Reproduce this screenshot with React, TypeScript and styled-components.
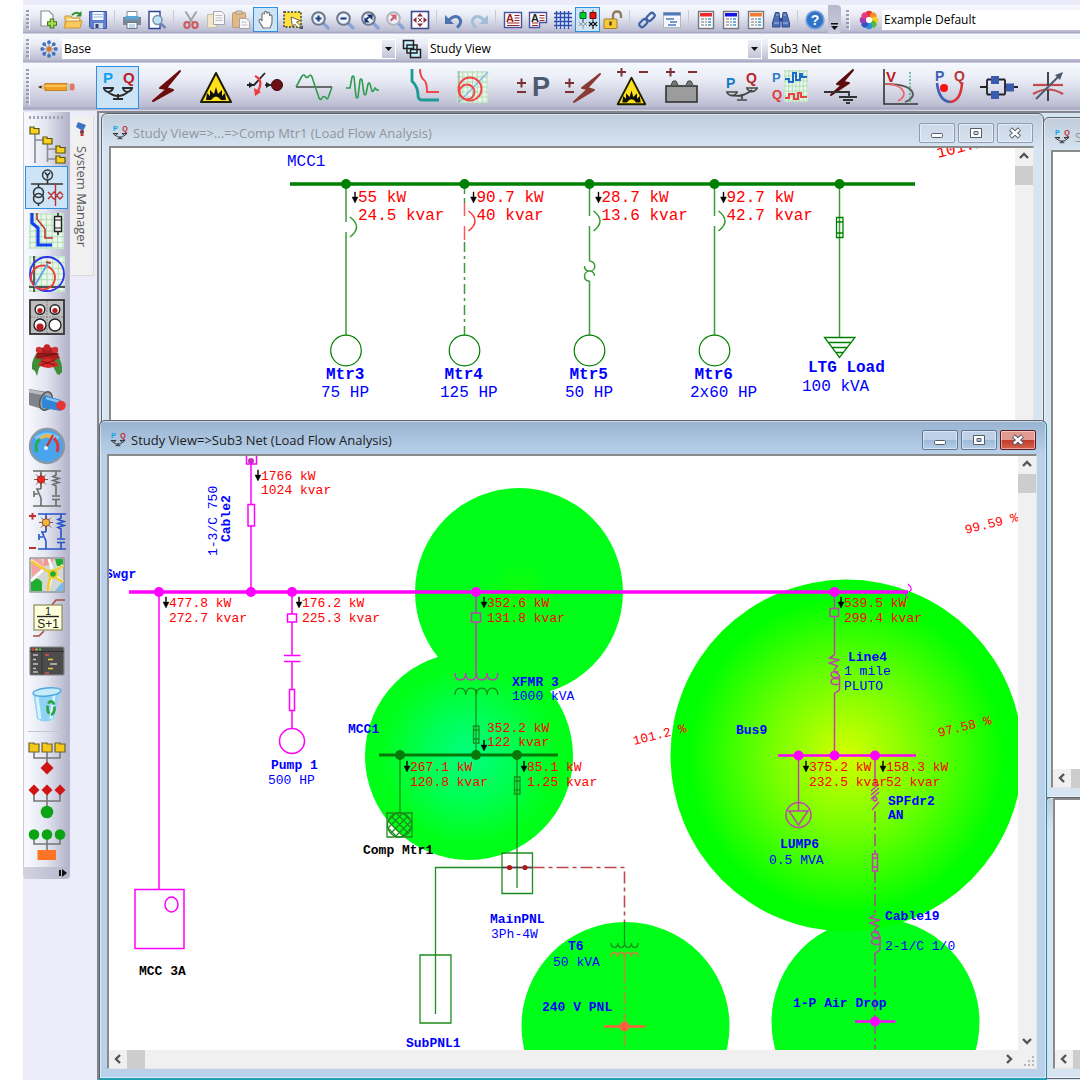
import React from "react";
import styled, { createGlobalStyle, css } from "styled-components";

const UI_FONT = `"Open Sans", "Noto Sans", sans-serif`;
const MONO = `"Liberation Mono", "DejaVu Sans Mono", monospace`;
const GREEN = "#008000";
const MAGENTA = "#ff00ff";
const BLUE = "#0000ff";
const RED = "#ff0000";

const GlobalStyle = createGlobalStyle`
  * { box-sizing: border-box; }
  body { margin: 0; background: #fff; font-family: ${UI_FONT}; font-size: 12px; color: #000; }
  button, select { font: inherit; color: inherit; }
`;

/* ---------- shell ---------- */

const Shell = styled.div`
  display: flex;
  flex-direction: column;
  height: 100vh;
  margin-left: 23px;
  padding-top: 5px;
  overflow: hidden;
  background: #ebebfa;
`;

const ToolRow = styled.div`
  display: flex;
  flex: none;
`;

const toolbarSkin = css`
  background: linear-gradient(#f6f9fe 0%, #e9ecf5 35%, #bcbcd2 90%, #a9a9c3 94%, #a9a9c3 96%, #e6e6f2 100%);
`;

const Toolbar = styled.div<{ $grow?: boolean; $height: number }>`
  ${toolbarSkin}
  display: flex;
  align-items: center;
  flex: ${(p) => (p.$grow ? "1 1 0" : "none")};
  min-width: 0;
  height: ${(p) => p.$height}px;
  padding-left: 3px;
  overflow: hidden;
`;

const Grip = styled.span`
  flex: none;
  width: 4px;
  height: 20px;
  margin-right: 5px;
  background: repeating-linear-gradient(#9a9aae 0 2px, transparent 2px 4px);
  border-right: 1px solid #f6f6fc;
`;

const TallGrip = styled(Grip)`
  height: 36px;
`;

const SideGrip = styled.span`
  flex: none;
  width: 36px;
  height: 3px;
  margin: 4px 0;
  background: repeating-linear-gradient(90deg, #a2a2b4 0 2px, transparent 2px 4px);
`;

const Separator = styled.span`
  flex: none;
  width: 1px;
  height: 20px;
  margin: 0 4px;
  background: #c9c9d4;
`;

const buttonSkin = css<{ $active?: boolean }>`
  display: flex;
  align-items: center;
  justify-content: center;
  flex: none;
  padding: 0;
  border: 1px solid transparent;
  background: transparent;
  ${(p) => p.$active && css`
    border-color: #2f8fe0;
    background: #cde4f7;
  `}
`;

const SmallButton = styled.button<{ $active?: boolean; $wide?: boolean }>`
  ${buttonSkin}
  width: ${(p) => (p.$wide ? 29 : 25)}px;
  height: 25px;
`;

const LargeButton = styled.button<{ $active?: boolean }>`
  ${buttonSkin}
  width: 43px;
  height: 43px;
`;

const LargeGroup = styled.div`
  display: flex;
  gap: 6px;
  margin-right: 18px;
`;

const OverflowButton = styled.button`
  display: flex;
  align-items: flex-end;
  justify-content: center;
  width: 13px;
  height: 29px;
  margin: 0 2px 0 1px;
  padding: 0 0 4px;
  border: 0;
  border-radius: 0 4px 4px 0;
  background: linear-gradient(#b9b9cc, #c9c9dc);
`;

const Combo = styled.label<{ $fixed?: boolean }>`
  display: grid;
  flex: ${(p) => (p.$fixed ? "0 1 334px" : "1 1 0")};
  min-width: 0;
  height: 20px;
  background: #fff;
`;

const ComboSelect = styled.select`
  grid-area: 1 / 1;
  min-width: 0;
  width: 100%;
  height: 20px;
  padding: 0 0 0 2px;
  border: 0;
  background: transparent;
  appearance: none;
  line-height: 20px;
`;

const ComboArrow = styled.span`
  grid-area: 1 / 1;
  justify-self: end;
  display: flex;
  align-items: center;
  justify-content: center;
  width: 13px;
  height: 18px;
  margin: 1px;
  background: linear-gradient(#eeeef6, #c3c3d8);
  pointer-events: none;
`;

const ComboIcon = styled.span<{ $lead?: boolean }>`
  display: flex;
  justify-content: center;
  flex: none;
  width: ${(p) => (p.$lead ? 27 : 32)}px;
`;

const Gap = styled.span`
  flex: none;
  width: 6px;
`;

const Workspace = styled.div`
  display: flex;
  flex: 1;
  min-height: 0;
`;

const SideColumn = styled.aside`
  flex: none;
  width: 47px;
  padding-top: 1px;
`;

const SideBar = styled.nav`
  display: flex;
  flex-direction: column;
  align-items: center;
  border-right: 1px solid #b9b9cb;
  border-left: 1px solid #c9c9d8;
  background: linear-gradient(90deg, #f6f8fd 10%, #e2e4f0 50%, #b3b3c9 100%);
`;

const SideSeparator = styled.span`
  width: 38px;
  height: 1px;
  margin: 6px 0;
  background: #c4c4ca;
`;

const SideFooter = styled.div`
  display: flex;
  justify-content: flex-end;
  height: 12px;
  padding: 2px 3px 0 0;
  border-radius: 0 0 4px 4px;
  background: linear-gradient(90deg, #d3d3e0, #b6b6ca);
`;

const TabColumn = styled.div`
  flex: none;
  width: 27px;
  padding: 5px 3px 0 1px;
`;

const SideTab = styled.button`
  display: flex;
  flex-direction: column;
  align-items: center;
  gap: 9px;
  width: 23px;
  height: 160px;
  padding: 5px 0 0;
  border: 1px solid #d9d9d9;
  border-top: 0;
  border-left: 0;
  background: #f0f0f0;
  color: #5a5a5a;
`;

const SideTabText = styled.span`
  writing-mode: vertical-rl;
  font-size: 13px;
  line-height: 20px;
`;

/* ---------- windows on the desktop ---------- */

const Desktop = styled.main`
  position: relative;
  flex: 1;
  min-width: 0;
  overflow: hidden;
  border-top: 2px solid #85858d;
  border-left: 2px solid #85858d;
  background: #d7e4f2;
`;

interface Box {
  $left: number;
  $top: number;
  $width: number;
  $height: number;
}

const Frame = styled.section<Box & { $front?: boolean }>`
  position: absolute;
  left: ${(p) => p.$left}px;
  top: ${(p) => p.$top}px;
  width: ${(p) => p.$width}px;
  height: ${(p) => p.$height}px;
  display: flex;
  flex-direction: column;
  padding: 0 9px 9px 7px;
  border: 1px solid #5c646c;
  border-radius: 6px 6px 0 0;
  box-shadow: inset 0 0 0 1px rgba(255, 255, 255, 0.5);
  background: ${(p) =>
    p.$front ? "linear-gradient(#99b4d1, #b9d1ea 34px)" : "linear-gradient(#bfcddb, #d7e4f2 34px)"};
  ${(p) => p.$front && css`
    border-right-color: #1f8894;
    border-bottom: 2px solid #1fa3b3;
  `}
`;

const TitleBar = styled.header<{ $dim?: boolean }>`
  display: flex;
  align-items: center;
  flex: none;
  gap: 4px;
  height: ${(p) => (p.$dim ? 32 : 33)}px;
  padding: 5px 1px 0 2px;
  color: ${(p) => (p.$dim ? "#8f959b" : "#1c1c1c")};
`;

const Title = styled.h2`
  flex: 1;
  margin: 0;
  overflow: hidden;
  font-size: 13px;
  font-weight: 400;
  line-height: 20px;
  white-space: nowrap;
`;

const CaptionButtons = styled.div`
  display: flex;
  gap: 3px;
`;

const CaptionButton = styled.button<{ $danger?: boolean; $dim?: boolean }>`
  display: flex;
  align-items: center;
  justify-content: center;
  width: 36px;
  height: 20px;
  padding: 0;
  border: 1px solid ${(p) => (p.$danger ? "#5c1a20" : p.$dim ? "#8b9cb4" : "#5f7694")};
  border-radius: 2px;
  box-shadow: inset 0 0 0 1px rgba(255, 255, 255, 0.45);
  background: ${(p) =>
    p.$danger
      ? "linear-gradient(#e19a90 0 48%, #bf3a2b 50%, #d4624c)"
      : p.$dim
      ? "linear-gradient(#ccd8e5, #d6e2ef)"
      : "linear-gradient(#bed1e7 0 48%, #9db9d8 50%, #b5cde6)"};
`;

const Client = styled.div`
  display: grid;
  grid-template-columns: minmax(0, 1fr) auto;
  grid-template-rows: minmax(0, 1fr) auto;
  flex: 1;
  min-height: 0;
  border: solid #8a8a8a;
  border-width: 2px 1px 1px 2px;
  border-right-color: #e6e6e6;
  border-bottom-color: #e6e6e6;
  background: #fff;
`;

const Canvas = styled.div`
  min-width: 0;
  min-height: 0;
  overflow: hidden;
`;

const Diagram = styled.svg`
  display: block;
  font-family: ${MONO};
`;

const VScroll = styled.div`
  display: flex;
  flex-direction: column;
  width: 18px;
  background: #f0f0f0;
`;

const HScroll = styled.div`
  display: flex;
  height: 18px;
  background: #f0f0f0;
`;

const Corner = styled.div`
  display: flex;
  align-items: flex-end;
  justify-content: flex-end;
  width: 18px;
  background: #f0f0f0;
`;

const ScrollArrow = styled.button`
  display: flex;
  align-items: center;
  justify-content: center;
  flex: none;
  width: 18px;
  height: 18px;
  padding: 0;
  border: 0;
  background: transparent;
`;

const Thumb = styled.div`
  flex: none;
  width: 18px;
  height: 19px;
  background: #cdcdcd;
`;

const Fill = styled.div`
  flex: 1;
`;

/* ---------- icon helpers ---------- */

const Glyph = ({ size, children, vb }: { size: number; vb?: string; children: React.ReactNode }) => (
  <svg width={size} height={size} viewBox={vb ?? `0 0 ${size} ${size}`} fill="none" aria-hidden="true">
    {children}
  </svg>
);

const Sheet = ({ x = 3, y = 1 }: { x?: number; y?: number }) => (
  <path d={`M${x} ${y}h8l4 4v11h-12z`} fill="#fdfdfd" stroke="#8e8e96" strokeWidth="1.2" />
);

const Lens = ({ ring = "#8d95a3", children }: { ring?: string; children?: React.ReactNode }) => (
  <>
    <path d="M13 13l5 5" stroke="#86a6d8" strokeWidth="3.4" strokeLinecap="round" />
    <circle cx="8.500" cy="8.500" r="6.300" fill="#eaf4fc" stroke={ring} strokeWidth="2" />
    {children}
  </>
);

const Report = ({ color }: { color: string }) => (
  <>
    <rect x="2.500" y="1.500" width="15" height="17" fill="#fafafa" stroke="#77777f" strokeWidth="1.400" />
    <rect x="4" y="3" width="12" height="3.500" fill={color} />
    <path d="M5 9h3M5 12h3M5 15h3M9 9h2M9 12h2M9 15h2" stroke="#9aa0aa" strokeWidth="1.600" />
    <path d="M12 9h3M12 12h3M12 15h3" stroke="#66b4dc" strokeWidth="2" />
  </>
);

const smallIcons: Record<string, React.ReactNode> = {
  New: (
    <>
      <Sheet />
      <path d="M14 8.500v10M9 13.500h10" stroke="#3c7d1c" strokeWidth="4.600" />
      <path d="M14 9.500v8M10 13.500h8" stroke="#a4dd4c" strokeWidth="2.400" />
    </>
  ),
  Open: (
    <>
      <path d="M2 17V6h6l1.500 2H17v9z" fill="#f7cf6a" stroke="#c9963a" />
      <path d="M4 9h12v5H4z" fill="#fff8e0" />
      <path d="M1 18l2.500-7H19l-2 7z" fill="#f9c95c" stroke="#c9963a" />
      <path d="M9 5q4-4 8-1" stroke="#2f8f2f" strokeWidth="2" />
      <path d="M18.500 1v5.500H13z" fill="#2f8f2f" />
    </>
  ),
  Save: (
    <>
      <path d="M1.500 1.500h17v17H3l-1.500-1.500z" fill="#5d7fd0" stroke="#3f57a4" />
      <path d="M4.500 2h11v8h-11z" fill="#f4f8ff" />
      <path d="M5.500 4.500h9M5.500 7h9" stroke="#9fb4dc" />
      <path d="M6 13h9v5.500H6z" fill="#cdd6e4" />
      <path d="M7.500 14h3v4h-3z" fill="#34437c" />
    </>
  ),
  Print: (
    <>
      <path d="M5 1.500h10V8H5z" fill="#fff" stroke="#7b8795" />
      <path d="M1 7h18v8H1z" fill="#7b8794" />
      <path d="M3.500 6h13v3.500h-13z" fill="#5aa4dc" />
      <path d="M5 12.500h10v6H5z" fill="#f7fbff" stroke="#6b7888" />
      <path d="M7 15h6M7 17h6" stroke="#86b4dc" />
    </>
  ),
  Preview: (
    <>
      <path d="M2 1.500h11v17H2z" fill="#fff" stroke="#30418e" strokeWidth="1.400" />
      <path d="M13 13l5.500 5" stroke="#6f86b8" strokeWidth="2.800" />
      <circle cx="10.500" cy="10" r="4.500" fill="#bfe3f6" stroke="#7890a8" strokeWidth="1.500" />
    </>
  ),
  Cut: (
    <>
      <path d="M4.500 1.500l7 11M15.500 1.500l-7 11" stroke="#a3a3a9" strokeWidth="2" />
      <ellipse cx="6" cy="15" rx="2.600" ry="3" stroke="#d05a5e" strokeWidth="2.200" />
      <ellipse cx="14" cy="15" rx="2.600" ry="3" stroke="#d05a5e" strokeWidth="2.200" />
    </>
  ),
  Copy: (
    <>
      <path d="M1.500 4.500h9v13h-9z" fill="#f2e7c8" stroke="#c9bfa4" />
      <path d="M7.500 1.500h8l3 3v10h-11z" fill="#f8f8f8" stroke="#a3a3a8" />
      <path d="M9.500 5.500h7M9.500 8h7M9.500 10.500h7" stroke="#bdbdc2" />
    </>
  ),
  Paste: (
    <>
      <rect x="1.500" y="2.500" width="13" height="15" rx="1" fill="#e2b886" stroke="#c59a6a" />
      <path d="M5 1h6v3H5z" fill="#d9d0c0" stroke="#a89c88" />
      <path d="M8.500 8.500h7l3 3v7h-10z" fill="#f8f8f8" stroke="#a3a3a8" />
      <path d="M10.500 12h5M10.500 15h6" stroke="#bdbdc2" />
    </>
  ),
  Pan: (
    <path
      d="M6 18c-1-3-4-5-4-7.500 0-1.500 2-1.500 3 .5V4.500c0-2 2.400-2 2.400 0V2.800c0-2 2.600-2 2.600 0v1c0-2 2.600-1.800 2.600 0V6c0-1.600 2.400-1.600 2.400 0v6c0 3-1.500 4-2 6z"
      transform="translate(1 0)"
      fill="#fbfbfb"
      stroke="#77777c"
      strokeWidth="1.200"
    />
  ),
  Marquee: (
    <>
      <rect x="1" y="2" width="17" height="15" fill="#ffe23c" stroke="#333" strokeWidth="1.400" strokeDasharray="2 1.500" />
      <path d="M8 7l9 3.500-3.500 1.500 4 4-2 2-4-4L9.500 17z" fill="#fff" stroke="#666" />
      <path d="M20 15v4h-4z" fill="#555" />
    </>
  ),
  "Zoom in": <Lens ring="#6e7788"><path d="M5.500 8.500h6M8.500 5.500v6" stroke="#24427c" strokeWidth="2.200" /></Lens>,
  "Zoom out": <Lens ring="#6e7788"><path d="M5.500 8.500h6" stroke="#24427c" strokeWidth="2.200" /></Lens>,
  "Zoom previous": <Lens ring="#6e7788"><path d="M6 11q0-4 4-4M8 5h4v4zM5 8.500V12h3.500z" fill="#16306c" stroke="#16306c" strokeWidth="1.100" /></Lens>,
  "Zoom next": <Lens ring="#b4b4bc"><path d="M5 4.500h6.500v6l-2-2-3 3-1.700-1.500 3-3z" fill="#d8606c" /></Lens>,
  "Zoom to fit": (
    <>
      <rect x="1.500" y="1.500" width="17" height="17" fill="#fbfbff" stroke="#3c4a8c" strokeWidth="1.600" />
      <path d="M10 3l3 3.500H7zM10 17l3-3.500H7zM3 10l3.500-3v6zM17 10l-3.500-3v6z" fill="#8c2f34" />
      <path d="M8 8l4 4M12 8l-4 4" stroke="#8c2f34" />
    </>
  ),
  Undo: (
    <>
      <path d="M1 5v9h9z" fill="#4c72b4" />
      <path d="M5 10q5-5 9-3 4 3 2 7-1 2-3 3.500" stroke="#4c72b4" strokeWidth="3" />
    </>
  ),
  Redo: (
    <>
      <path d="M19 5v9h-9z" fill="#a3bedb" />
      <path d="M15 10q-5-5-9-3-4 3-2 7 1 2 3 3.500" stroke="#a3bedb" strokeWidth="3" />
    </>
  ),
  "Text box": (
    <>
      <rect x="1.500" y="2.500" width="17" height="15" fill="#fff" stroke="#44549c" strokeWidth="1.400" />
      <text x="3" y="12" fontSize="11" fontWeight="700" fill="#9c2020" fontFamily="Liberation Sans">A</text>
      <path d="M11.500 5.500h5M11.500 8h5M11.500 10.500h5M4 13h12.500M4 15.500h12.500" stroke="#9c2020" />
    </>
  ),
  "Text label": (
    <>
      <path d="M1.500 2.500h17v10h-7v5h-10z" fill="#fff" stroke="#44549c" strokeWidth="1.400" />
      <text x="3" y="12" fontSize="11" fontWeight="700" fill="#222" fontFamily="Liberation Sans">A</text>
      <path d="M11.500 5.500h5M11.500 8h5M11.500 10.500h5M4 13h6M4 15.500h6" stroke="#9c2020" />
    </>
  ),
  Grid: (
    <>
      <rect x="2" y="2" width="16" height="16" fill="#d7e6fa" />
      <path d="M1 3.500h18M1 7.500h18M1 11.500h18M1 15.500h18M3.500 1v18M7.500 1v18M11.500 1v18M15.500 1v18" stroke="#2c4cae" strokeWidth="1.300" />
    </>
  ),
  "Device status": (
    <>
      <path d="M2 2.500h6v6H2z" fill="#00d020" stroke="#064" />
      <path d="M12 2.500h6v6h-6z" fill="#f01010" stroke="#611" />
      <path d="M5 0v2M5 9v3M15 0v2M15 9v3" stroke="#333" />
      <path d="M1 12l2 2 2-2 2 2 2-2M1 16l2-2 2 2 2-2 2 2M5 16v3" stroke="#999" />
      <path d="M11 12l2 2 2-2 2 2 2-2M11 16l2-2 2 2 2-2 2 2M15 16v3" stroke="#111" strokeWidth="1.200" />
    </>
  ),
  Unlock: (
    <>
      <path d="M10 9V5.500q0-4 4-4t4 4V8" stroke="#8a7d62" strokeWidth="2.400" />
      <rect x="1" y="9" width="13" height="9.500" rx="1" fill="#f5c93e" stroke="#a87d1c" />
      <path d="M7.500 11.500v4" stroke="#5a430c" strokeWidth="2.400" />
    </>
  ),
  Link: (
    <>
      <rect x="-4" y="-2.700" width="9" height="5.400" rx="2.700" transform="translate(6 13.500) rotate(-45)" stroke="#3c64a4" strokeWidth="2.200" />
      <rect x="-5" y="-2.700" width="9" height="5.400" rx="2.700" transform="translate(14 6.500) rotate(-45)" stroke="#3c64a4" strokeWidth="2.200" />
    </>
  ),
  Schedule: (
    <>
      <rect x="1.500" y="2.500" width="17" height="15" fill="#f6f8fc" stroke="#b0b9c8" />
      <rect x="1.500" y="2.500" width="17" height="3" fill="#4f79b8" />
      <path d="M4 9h8M8 12h7M6 15h8" stroke="#4f79b8" strokeWidth="1.600" />
    </>
  ),
  "Report red": <Report color="#f02a2a" />,
  "Report blue": <Report color="#1414e0" />,
  "Report orange": <Report color="#f47a32" />,
  Find: (
    <>
      <path d="M4.500 2.500h3.500l1 8v6.500H1.500v-4zM15.500 2.500H12l-1 8v6.500h7.500v-4z" fill="#4c6fb4" stroke="#2c4a8c" />
      <path d="M8 8h4v3.500H8z" fill="#2c4a8c" />
      <path d="M3 13h5M12 13h5M5 5h2.500M12.500 5H15" stroke="#a8c0ea" />
    </>
  ),
  Help: (
    <>
      <circle cx="10" cy="10" r="9" fill="#2f74c8" stroke="#7fa6d8" strokeWidth="1.600" />
      <text x="10" y="15" textAnchor="middle" fontSize="14" fontWeight="700" fill="#fff" fontFamily="Liberation Sans">?</text>
    </>
  ),
};

const Bolt = ({ fill, d = "M32 3L12 20l7 1L5 33l20-11-7-2z" }: { fill: string; d?: string }) => (
  <path d={d} fill={fill} stroke={fill} strokeWidth="2" strokeLinejoin="round" />
);

const Flash = () => (
  <>
    <path d="M19 5L34 34H4z" fill="#ffe01c" stroke="#1c1c00" strokeWidth="2" strokeLinejoin="round" />
    <path d="M9 32l1-7 3 3 0-6 4 4 2-7 2 7 4-4 0 6 3-3 1 7h-5q-5-7-10 0z" fill="#101010" />
  </>
);

const Letter = ({ x, y, size, fill, children }: { x: number; y: number; size: number; fill: string; children: string }) => (
  <text x={x} y={y} fontSize={size} fontWeight="700" fill={fill} fontFamily="Liberation Sans">{children}</text>
);

const PQScale = () => (
  <>
    <Letter x={4} y={15} size={15} fill="#12a0f0">P</Letter>
    <Letter x={24} y={15} size={15} fill="#c01c22">Q</Letter>
    <path d="M4 20h11M23 20h11M5 21q4 6 9 0M24 21q4 6 9 0M9 24q10 8 20 0M19 26v4M14 31h10" stroke="#2c2c2c" strokeWidth="2" />
  </>
);

const PlusMinus = ({ x, y }: { x: number; y: number }) => (
  <path d={`M${x} ${y}h9M${x + 4.5} ${y - 4.5}v9M${x} ${y + 9}h9`} stroke="#7c3034" strokeWidth="2" />
);

const Polarity = () => <path d="M4 4h9M8.500 -.5v9M26 4h9" stroke="#7c3034" strokeWidth="2" />;

const GridPaper = ({ x, y, w, h }: { x: number; y: number; w: number; h: number }) => (
  <>
    <rect x={x} y={y} width={w} height={h} fill="#eaf6ea" />
    {[0, 1, 2, 3, 4, 5, 6].map((i) => (
      <path
        key={i}
        d={`M${x} ${y + 1 + (i * (h - 2)) / 6}h${w}M${x + 1 + (i * (w - 2)) / 6} ${y}v${h}`}
        stroke="#a6d8ae"
        strokeWidth=".8"
      />
    ))}
  </>
);

const largeIcons: Record<string, React.ReactNode> = {
  Edit: (
    <>
      <path d="M0 19l8-3.500v7z" fill="#e8c090" />
      <path d="M0 19l3.500-1.500v3z" fill="#222" />
      <rect x="7" y="15.500" width="22" height="7" fill="#f0a020" stroke="#b87818" strokeWidth=".8" />
      <path d="M7 18h22" stroke="#ffd070" strokeWidth="1.400" />
      <rect x="29" y="15.500" width="3" height="7" fill="#c8c8c8" />
      <rect x="32" y="15.500" width="4.500" height="7" rx="1.500" fill="#e07868" />
    </>
  ),
  "Load flow": <PQScale />,
  "Short circuit": <Bolt fill="#6c0c0c" />,
  "Arc flash": <Flash />,
  "Motor acceleration": (
    <>
      <path d="M1 17h7l11-12" stroke="#222" strokeWidth="1.800" />
      <path d="M3 14l5 3-5 3zM20 14l5 3-5 3z" fill="#222" />
      <path d="M9 8q9 4 3 15" stroke="#f03838" strokeWidth="2.200" />
      <path d="M8 20l1 8 6-4z" fill="#f03838" />
      <circle cx="31" cy="17" r="5.500" fill="#6c1014" stroke="#3c0808" />
      <path d="M19 17h6" stroke="#222" strokeWidth="1.600" />
    </>
  ),
  Harmonics: (
    <>
      <path d="M1 19h36" stroke="#444" strokeWidth="1.400" />
      <path d="M1 19L7 8q2-2 3 0 2 3 4 0 2-2 3 1L24 30q2 3 3 0 2-3 4 0 1 2 2 0L37 19" stroke="#2d9c50" strokeWidth="1.600" />
    </>
  ),
  Transient: (
    <path
      d="M2 20h4l2-11q1-2 2 0l2 20q1 2 2 0l2-17q1-2 2 0l2 14q1 2 2 0l2-10q1-2 2 0l2 7q1 1 2-1l1-2 1 1 1 1h2"
      stroke="#2d9c50"
      strokeWidth="1.600"
    />
  ),
  Coordination: (
    <>
      <path d="M7 1v12q6 6 6 14 0 5 4 5h17" stroke="#1c9a94" strokeWidth="2.800" />
      <path d="M15 1q0 8 4 11 3 2 3 12h12" stroke="#f04848" strokeWidth="2" />
    </>
  ),
  Protection: (
    <>
      <GridPaper x={3} y={3} w={31} h={32} />
      <path d="M5 34L34 4" stroke="#88bce8" strokeWidth="1.600" />
      <path d="M5 3v32" stroke="#8fa096" />
      <circle cx="16" cy="21" r="11.500" stroke="#f04848" strokeWidth="2" />
      <circle cx="13" cy="24" r="7.500" stroke="#f04848" strokeWidth="2" />
    </>
  ),
  "DC load flow": (
    <>
      <PlusMinus x={2} y={15} />
      <text x="17" y="28" fontSize="27" fontWeight="700" fill="#4c5a70" fontFamily="Liberation Sans">P</text>
    </>
  ),
  "DC short circuit": (
    <>
      <PlusMinus x={1} y={15} />
      <Bolt fill="#8a3a34" d="M36 6L18 20l6 1L10 34l20-12-7-2z" />
    </>
  ),
  "DC arc flash": (
    <>
      <g transform="translate(1 5) scale(.92)"><Flash /></g>
      <Polarity />
    </>
  ),
  Battery: (
    <>
      <Polarity />
      <path d="M9 17l2-4h3l2 4M24 17l2-4h3l2 4" fill="#777" stroke="#444" />
      <rect x="4" y="18" width="31" height="16" fill="#9c9c9c" stroke="#333" strokeWidth="1.600" />
    </>
  ),
  "Unbalanced load flow": (
    <>
      <Letter x={3} y={20} size={14} fill="#1478c4">P</Letter>
      <Letter x={23} y={15} size={14} fill="#b82428">Q</Letter>
      <path d="M3 24h12M23 20h12M4 25q5 5 10 0M24 21q5 5 10 0M9 27q10 3 20-5M19 26v5M14 32h10" stroke="#444" strokeWidth="1.700" />
    </>
  ),
  "Time domain load flow": (
    <>
      <GridPaper x={12} y={2} w={24} h={32} />
      <Letter x={0} y={14} size={13} fill="#2c7cc8">P</Letter>
      <Letter x={0} y={31} size={13} fill="#e03838">Q</Letter>
      <path d="M13 11h4v3h4V5h3v7h4V6h2v3h5" stroke="#1c6cc8" strokeWidth="2" />
      <path d="M13 30h4v-4h5v5h4v-6h3v4h6" stroke="#f04040" strokeWidth="2" />
    </>
  ),
  "Ground fault": (
    <>
      <Bolt fill="#5c0c0c" d="M32 2L16 16l5 1L10 27l18-12-6-1z" />
      <path d="M3 24h25v5M18 29h18M22 32h10M25 35h4" stroke="#333" strokeWidth="1.800" />
    </>
  ),
  "Voltage stability": (
    <>
      <path d="M2 1v35h34" stroke="#333" strokeWidth="1.600" />
      <text x="4" y="14" fontSize="15" fontWeight="700" fill="#b81c22" fontFamily="Liberation Sans">V</text>
      <path d="M3 16q26 0 28 10 0 5-8 8" stroke="#555" strokeWidth="1.800" />
      <path d="M3 16q16 0 19 9 0 5-6 8" stroke="#f06060" strokeWidth="1.600" />
      <path d="M28 4v32" stroke="#2f9c70" strokeWidth="1.200" strokeDasharray="2 1.500" />
    </>
  ),
  "Optimal power flow": (
    <>
      <Letter x={4} y={13} size={14} fill="#4060b4">P</Letter>
      <Letter x={23} y={13} size={14} fill="#b83438">Q</Letter>
      <path d="M6 15q2 18 13 19" stroke="#4060b4" strokeWidth="2.600" />
      <path d="M19 34q11-1 12-19" stroke="#d83438" strokeWidth="2.600" />
      <circle cx="13" cy="20" r="4" fill="#ff1010" />
    </>
  ),
  Reliability: (
    <>
      <path d="M0 19h7M7 11.500v15M7 11.500h6M7 26.500h6M19 11.500h6M19 26.500h6M25 11.500v15M25 19h13" stroke="#222" strokeWidth="1.800" />
      <path d="M11 8h8v8h-8zM11 23h8v8h-8zM26 15.500h8v8h-8z" fill="#3a5cae" />
    </>
  ),
  "Capacitor placement": (
    <>
      <path d="M4 17h30" stroke="#c04a50" strokeWidth="2.200" />
      <path d="M4 26q15-9 30 0" stroke="#c04a50" strokeWidth="2.200" />
      <path d="M19 4v13M19 22v11" stroke="#333" strokeWidth="1.800" />
      <path d="M7 31L30 8" stroke="#4c5a70" strokeWidth="2" />
      <path d="M34 4l-3 8-5-5z" fill="#4c5a70" />
    </>
  ),
};

const Folder = ({ x, y }: { x: number; y: number }) => (
  <path d={`M${x} ${y}h4v1.500h5v5.500h-9z`} fill="#f7d020" stroke="#5c5410" strokeWidth="1.200" />
);

const Ladder = ({ line, lamp, dx = 0 }: { line: string; lamp: string; dx?: number }) => (
  <g transform={`translate(${dx} 0)`}>
    <path d="M4 1h28M4 36h28M12 1v18M12 30v6M27 1v4l-3 1.500 6 2-6 2 6 2-6 2 3 1.500v9M23 26h8M23 29.500h8M27 30v6M12 19h-4l4 9M5 21v6M5 24h4M12 28v3" stroke={line} strokeWidth="1.600" />
    <path d="M5 9.500h14M12 3v14M7 4.500l10 10M17 4.500l-10 10" stroke="#7c4a34" strokeWidth=".9" />
    <circle cx="12" cy="9.500" r="3.800" fill={lamp} stroke="#7c3020" strokeWidth=".8" />
  </g>
);

const Tee = ({ top = 9 }: { top?: number }) => (
  <path d={`M6 ${top}v8h26v-8M19 ${top}v15`} stroke="#777" strokeWidth="1.600" />
);

const Diamond = ({ x, y, r }: { x: number; y: number; r: number }) => (
  <path d={`M${x} ${y - r}l${r} ${r}-${r} ${r}-${r}-${r}z`} fill="#d01414" />
);

const sideIcons: Record<string, React.ReactNode> = {
  "Project tree": (
    <>
      <path d="M7 8v29M7 14h8M19.500 18v18M19.500 23h8M19.500 33h8" stroke="#8a8a92" strokeWidth="1.600" />
      <Folder x={2} y={1} />
      <Folder x={15} y={11} />
      <Folder x={28} y={20} />
      <Folder x={28} y={30} />
    </>
  ),
  "One-line diagram": (
    <>
      <circle cx="19.500" cy="6" r="5" stroke="#333" strokeWidth="1.400" />
      <path d="M17 3.500l2.500 3 2.500-3M19.500 6.500v3M19.500 11v4M3 15h32M10.500 15v4M10.500 34v3" stroke="#333" strokeWidth="1.600" />
      <circle cx="10.500" cy="23.500" r="5" stroke="#333" strokeWidth="1.500" />
      <circle cx="10.500" cy="29.500" r="5" stroke="#333" strokeWidth="1.500" />
      <path d="M27.500 15v22M20 23l3 3 3-3 3 3 3-3 3 3M20 30l3-3 3 3 3-3 3 3 3-3" stroke="#b43034" strokeWidth="1.400" />
    </>
  ),
  "Star view": (
    <>
      <GridPaper x={1} y={1} w={35} h={36} />
      <path d="M4 1v10l6 5v17h14" stroke="#1040f0" strokeWidth="3.200" />
      <path d="M9 1v6l8 10v9h8" stroke="#b83434" strokeWidth="1.600" />
      <path d="M30 1v22" stroke="#222" strokeWidth="1.500" />
      <path d="M26.500 4.500h7v15h-7z" fill="#f4f4f4" stroke="#222" strokeWidth="1.400" />
      <path d="M26.500 8h7M26.500 16h7" stroke="#222" />
    </>
  ),
  "Relay view": (
    <>
      <GridPaper x={1} y={1} w={36} h={36} />
      <path d="M6 1v36M1 32h36" stroke="#222" strokeWidth="1.400" />
      <circle cx="19" cy="19" r="17" stroke="#3030f0" strokeWidth="1.800" />
      <circle cx="15" cy="22.500" r="12" stroke="#f03838" strokeWidth="1.800" />
      <path d="M6 32L20 8" stroke="#58a8e8" strokeWidth="1.800" />
      <path d="M18 7l5 1" stroke="#c04040" strokeWidth="2" />
    </>
  ),
  Raceway: (
    <>
      <rect x="2" y="2" width="34" height="34" fill="#bdbdbd" stroke="#333" strokeWidth="1.800" />
      <path d="M3 19h32M19 3v32" stroke="#888" strokeDasharray="2 1" />
      <circle cx="12" cy="11.500" r="4.800" fill="#fff" stroke="#222" strokeWidth="1.400" />
      <circle cx="27" cy="11.500" r="4.800" fill="#fff" stroke="#222" strokeWidth="1.400" />
      <circle cx="12" cy="27" r="6" fill="#fff" stroke="#222" strokeWidth="1.400" />
      <circle cx="27" cy="27" r="6" fill="#fff" stroke="#222" strokeWidth="1.400" />
      <circle cx="12" cy="12.500" r="2.600" fill="#b81c1c" />
      <circle cx="27" cy="12.500" r="2.600" fill="#b81c1c" />
      <circle cx="12" cy="29" r="3.600" fill="#b81c1c" />
    </>
  ),
  "Ground grid": (
    <>
      <path d="M8 13q-5 8-4 15l3 2 2 5 2-8q8-9 15 0l3 6 2 1 3-3q1-11-6-18z" fill="#3f8f38" />
      <path d="M7 17l4-9 8-3 8 3 5 9-8 3-8-1z" fill="#a82020" />
      <circle cx="11" cy="9" r="3.200" fill="#d03030" />
      <circle cx="19" cy="6.500" r="3.200" fill="#c42424" />
      <circle cx="27" cy="9" r="3.200" fill="#d03030" />
      <path d="M10 24q4-7 10-7t11 8l-5 1-6 1-5-1z" fill="#d82828" />
      <path d="M8 13h23M9 16l20-3M13 20l14 4M27 19l-14 5" stroke="#5c1010" strokeWidth=".8" />
    </>
  ),
  Cable: (
    <>
      <path d="M1 5l18 3q8 7 4 16-2 3-6 2L1 21z" fill="#80848a" />
      <path d="M1 7l16 3" stroke="#b8bcc0" strokeWidth="3" />
      <ellipse cx="18" cy="17" rx="6" ry="9.500" transform="rotate(18 18 17)" fill="#a0a4a8" stroke="#55595e" strokeWidth="1.500" />
      <path d="M16 11l17 5v11l-18-3q-3-7 1-13z" fill="#2f86d4" />
      <path d="M18 14l14 4" stroke="#88c4f4" strokeWidth="2.500" />
      <circle cx="33" cy="21.500" r="4.800" fill="#e83434" />
    </>
  ),
  Monitor: (
    <>
      <circle cx="19" cy="19" r="17" fill="#48a4ee" stroke="#8b98a6" strokeWidth="2.400" />
      <path d="M8 12q11-8 22 0" stroke="#84c4f8" strokeWidth="5" />
      <path d="M9 25q-3-8 3-13" stroke="#30a850" strokeWidth="3" />
      <path d="M13 11q5-4 11-1" stroke="#f4b838" strokeWidth="3" />
      <path d="M26 11q6 6 3 14" stroke="#e03434" strokeWidth="3" />
      <path d="M18 21l7-13" stroke="#d82828" strokeWidth="2" />
      <circle cx="18" cy="21" r="2" fill="#dff" />
    </>
  ),
  "Control system": <Ladder line="#6c6c6c" lamp="#f02424" dx={1} />,
  "DC control system": (
    <>
      <Ladder line="#2454c8" lamp="#f4b838" dx={6} />
      <path d="M1 3h7M4.500 -.5v7M1 35h7" stroke="#c03030" strokeWidth="2" />
    </>
  ),
  Map: (
    <>
      <rect x="2" y="2" width="34" height="34" fill="#d4d8d4" stroke="#888" strokeWidth="1.200" />
      <path d="M3 3h10l4 7-13 11z" fill="#f4a4a0" />
      <path d="M16 3h10l-4 6-6 1z" fill="#f09898" />
      <path d="M3 26q6-7 11 0v9H3z" fill="#1fae30" />
      <path d="M27 3h8v7h-6z" fill="#1fae30" />
      <path d="M27 35l8-10v10z" fill="#78bcf0" />
      <path d="M3 4l13 9 8 5 11-9M24 18l-4 17M25 18l10 8M16 13L3 25M25 17L21 3" stroke="#fff" strokeWidth="2.600" />
      <path d="M3 5q9 6 20 12l12-7M24 18q-4 7-4 17M25 20l10 6" stroke="#f0cc30" strokeWidth="2.600" />
      <circle cx="25" cy="18" r="5" fill="#f0cc30" />
      <circle cx="25" cy="18" r="2.800" fill="#1fae30" />
    </>
  ),
  "User-defined model": (
    <>
      <path d="M24 6l4-5h9M16 32l-5 5H5" stroke="#a84c48" strokeWidth="1.600" />
      <rect x="6" y="6" width="28" height="25" fill="#ffffdc" stroke="#8a8a5c" strokeWidth="1.200" />
      <path d="M9 17.500h22" stroke="#222" strokeWidth="1.400" />
      <text x="20" y="16" textAnchor="middle" fontSize="11" fill="#222" fontFamily="Liberation Sans">1</text>
      <text x="20" y="29" textAnchor="middle" fontSize="12" fill="#222" fontFamily="Liberation Sans">S+1</text>
    </>
  ),
  Console: (
    <>
      <rect x="2" y="5" width="34" height="28" rx="1" fill="#4c4c4c" stroke="#888" strokeWidth="1.200" />
      <path d="M2 9.500h34M14 10v23" stroke="#303030" />
      <path d="M4 7.500h2" stroke="#e44" strokeWidth="2" />
      <path d="M7.500 7.500h2" stroke="#ec4" strokeWidth="2" />
      <path d="M11 7.500h2" stroke="#4c6" strokeWidth="2" />
      <path d="M5 13h5M5 17.500h3M5 22h5M5 26.500h3M5 30h5M22 22h7" stroke="#c4c4c4" strokeWidth="1.600" />
      <path d="M17 13h4M17 31h4" stroke="#e05050" strokeWidth="1.600" />
      <path d="M20 17.500h5M20 26.500h5" stroke="#e8d040" strokeWidth="1.600" />
    </>
  ),
  Dumpster: (
    <>
      <path d="M5 7l4 27q8 5 17 0l7-30z" fill="#8fd4f6" />
      <path d="M9 12l3 22M26 10l-3 24" stroke="#d8f2fd" strokeWidth="3" />
      <ellipse cx="19" cy="7" rx="14" ry="4" transform="rotate(-6 19 7)" fill="#c8ebfb" stroke="#4ba8dc" strokeWidth="1.400" />
      <ellipse cx="23" cy="23" rx="3.500" ry="6.500" stroke="#2ea440" strokeWidth="2.800" strokeDasharray="8 2" />
    </>
  ),
  "Open presentation": (
    <>
      <Tee />
      <path d="M1 2h5v1h5v8H1zM14 2h5v1h5v8H14zM27 2h5v1h5v8H27z" fill="#f7c81c" stroke="#6b6030" strokeWidth="1.200" />
      <Diamond x={19} y={27} r={6.5} />
    </>
  ),
  "Open configuration": (
    <>
      <Tee />
      <Diamond x={6} y={6} r={5.5} />
      <Diamond x={19} y={6} r={5.5} />
      <Diamond x={32} y={6} r={5.5} />
      <circle cx="19" cy="28" r="6.300" fill="#0ca414" />
    </>
  ),
  "Open study case": (
    <>
      <Tee />
      <circle cx="6" cy="7.500" r="5.300" fill="#0ca414" />
      <circle cx="19" cy="7.500" r="5.300" fill="#0ca414" />
      <circle cx="32" cy="7.500" r="5.300" fill="#0ca414" />
      <rect x="9.500" y="23" width="18.500" height="10" fill="#ff7424" />
    </>
  ),
};

const DownArrow = () => (
  <svg width="7" height="4" viewBox="0 0 7 4" aria-hidden="true"><path d="M0 0h7L3.500 4z" fill="#111" /></svg>
);

const chevrons = { up: "M2 7l4-4 4 4", down: "M2 4l4 4 4-4", left: "M8 2L4 6l4 4", right: "M4 2l4 4-4 4" };

const Chevron = ({ to }: { to: keyof typeof chevrons }) => (
  <svg width="12" height="12" viewBox="0 0 12 12" fill="none" aria-hidden="true">
    <path d={chevrons[to]} stroke="#555" strokeWidth="2.400" />
  </svg>
);

/* ---------- toolbars ---------- */

const fileTools = [
  ["New", "Open", "Save"],
  ["Print", "Preview"],
  ["Cut", "Copy", "Paste", "Pan", "Marquee", "Zoom in", "Zoom out", "Zoom previous", "Zoom next", "Zoom to fit"],
  ["Undo", "Redo"],
  ["Text box", "Text label", "Grid", "Device status", "Unlock"],
  ["Link", "Schedule"],
  ["Report red", "Report blue", "Report orange", "Find"],
  ["Help"],
];

const studyTools = [
  ["Edit"],
  ["Load flow", "Short circuit", "Arc flash", "Motor acceleration", "Harmonics", "Transient"],
  ["Coordination", "Protection"],
  ["DC load flow", "DC short circuit", "DC arc flash", "Battery"],
  ["Unbalanced load flow", "Time domain load flow", "Ground fault"],
  ["Voltage stability", "Optimal power flow", "Reliability", "Capacitor placement"],
];

const sideNames = Object.keys(sideIcons);

const FileToolbar = () => (
  <Toolbar $height={29}>
    <Grip />
    {fileTools.map((group, g) => (
      <React.Fragment key={g}>
        {g > 0 && <Separator />}
        {group.map((name) => (
          <SmallButton
            key={name}
            type="button"
            aria-label={name}
            $active={name === "Pan" || name === "Device status"}
            $wide={name === "Marquee"}
          >
            <Glyph size={20}>{smallIcons[name]}</Glyph>
          </SmallButton>
        ))}
      </React.Fragment>
    ))}
    <OverflowButton type="button" aria-label="More tools">
      <svg width="7" height="7" viewBox="0 0 7 7" aria-hidden="true"><path d="M0 0h7v1.500H0zM0 3h7L3.500 7z" fill="#111" /></svg>
    </OverflowButton>
  </Toolbar>
);

const petals = ["#e8342c", "#f4902c", "#f4d02c", "#58b83c", "#2c94d8", "#3454c4", "#9c3cb4", "#e83c80"];

const ThemeToolbar = () => (
  <Toolbar $height={29} $grow>
    <Grip />
    <ComboIcon $lead>
      <Glyph size={20}>
        {petals.map((c, i) => (
          <circle key={c} cx="10" cy="4" r="3.300" fill={c} transform={`rotate(${i * 45} 10 10)`} />
        ))}
        <circle cx="10" cy="10" r="3" fill="#fff" />
      </Glyph>
    </ComboIcon>
    <Combo>
      <ComboSelect aria-label="Theme"><option>Example Default</option></ComboSelect>
    </Combo>
  </Toolbar>
);

const ContextToolbar = () => (
  <Toolbar $height={29} $grow>
    <Grip />
    <ComboIcon $lead>
      <Glyph size={18}>
        {[0, 45, 90, 135, 180, 225, 270, 315].map((a) => (
          <g key={a} transform={`rotate(${a} 9 9)`}>
            <path d="M9 7V3" stroke="#888" />
            <circle cx="9" cy="2.200" r="1.900" fill="#3f72c0" />
          </g>
        ))}
        <circle cx="9" cy="9" r="2.200" fill="#e07020" />
      </Glyph>
    </ComboIcon>
    <Combo $fixed>
      <ComboSelect aria-label="Revision"><option>Base</option></ComboSelect>
      <ComboArrow><DownArrow /></ComboArrow>
    </Combo>
    <ComboIcon>
      <Glyph size={20}>
        <path d="M1.500 1.500h10v8h-10zM5 6h10v8H5zM8.500 10.500h10v8h-10z" fill="#c4f0fc" stroke="#222" strokeWidth="1.500" />
      </Glyph>
    </ComboIcon>
    <Combo $fixed>
      <ComboSelect aria-label="Presentation"><option>Study View</option></ComboSelect>
      <ComboArrow><DownArrow /></ComboArrow>
    </Combo>
    <Gap />
    <Combo>
      <ComboSelect aria-label="Network"><option>Sub3 Net</option></ComboSelect>
    </Combo>
  </Toolbar>
);

const StudyToolbar = () => (
  <Toolbar $height={48} $grow>
    <TallGrip />
    {studyTools.map((group, g) => (
      <LargeGroup key={g}>
        {group.map((name) => (
          <LargeButton key={name} type="button" aria-label={name} $active={name === "Load flow"}>
            <Glyph size={38}>{largeIcons[name]}</Glyph>
          </LargeButton>
        ))}
      </LargeGroup>
    ))}
  </Toolbar>
);

const SystemBar = () => (
  <SideColumn>
    <SideBar aria-label="Systems">
      <SideGrip />
      {sideNames.map((name) => (
        <React.Fragment key={name}>
          {name === "Open presentation" && <SideSeparator />}
          <LargeButton type="button" aria-label={name} $active={name === "One-line diagram"}>
            <Glyph size={38}>{sideIcons[name]}</Glyph>
          </LargeButton>
        </React.Fragment>
      ))}
    </SideBar>
    <SideFooter>
      <svg width="8" height="8" viewBox="0 0 8 8" aria-hidden="true"><path d="M0 1h2v6H0zM3 0l5 4-5 4z" fill="#111" /></svg>
    </SideFooter>
  </SideColumn>
);

/* ---------- diagram parts ---------- */

interface LabelProps {
  x: number;
  y: number;
  size?: number;
  bold?: boolean;
  fill?: string;
  turn?: number;
  children: string;
}

const Label = ({ x, y, size = 13, bold, fill = BLUE, turn, children }: LabelProps) => (
  <text
    x={x}
    y={y}
    fontSize={size}
    fontWeight={bold ? 700 : 400}
    fill={fill}
    transform={turn ? `rotate(${turn} ${x} ${y})` : undefined}
  >
    {children}
  </text>
);

const FlowArrow = ({ x, y }: { x: number; y: number }) => (
  <path d={`M${x - 0.5} ${y}h1v5h2.500l-3 6-3-6h2.500z`} fill="#000" stroke="#000" strokeWidth=".4" />
);

const Reading = ({ x, y, p, q, size = 13, step = 15 }: { x: number; y: number; p: string; q: string; size?: number; step?: number }) => (
  <>
    <FlowArrow x={x - 3} y={y - 10} />
    <Label x={x} y={y} size={size} fill={RED}>{p}</Label>
    <Label x={x} y={y + step} size={size} fill={RED}>{q}</Label>
  </>
);

const Node = ({ x, y, fill = MAGENTA }: { x: number; y: number; fill?: string }) => <circle cx={x} cy={y} r="5" fill={fill} />;

const motors = [
  { x: 346, name: "Mtr3", hp: "75 HP", hpX: 321, p: "55 kW", q: "24.5 kvar", drop: 6 },
  { x: 464.5, name: "Mtr4", hp: "125 HP", hpX: 440, p: "90.7 kW", q: "40 kvar", drop: 0, tripped: true },
  { x: 589.5, name: "Mtr5", hp: "50 HP", hpX: 565, p: "28.7 kW", q: "13.6 kvar", drop: 0, overload: true },
  { x: 714.5, name: "Mtr6", hp: "2x60 HP", hpX: 690, p: "92.7 kW", q: "42.7 kvar", drop: 0 },
];

const MotorDiagram = () => (
  <Diagram width={904} height={280} viewBox="111 148 904 280" role="img" aria-label="MCC1 one-line diagram">
    <Label x={287} y={166} size={16}>MCC1</Label>
    <Label x={938} y={158} size={16} fill={RED} turn={-14}>101.2 %</Label>
    <path d="M290 184h625" stroke={GREEN} strokeWidth="3.400" />
    {motors.map((m) => {
      const top = 211 + m.drop;
      const breaker = m.tripped ? "#ff3030" : "#2f9c2f";
      return (
        <g key={m.name} fill="none" stroke="#3c9c3c" strokeWidth="1.500">
          {m.tripped ? (
            <>
              <path d={`M${m.x} 184v19`} strokeDasharray="10 4" />
              <path d={`M${m.x} 203v13M${m.x} 226v14`} stroke="#ff5a50" />
              <path d={`M${m.x} 242v93`} strokeDasharray="10 4 3 4" />
            </>
          ) : m.overload ? (
            <>
              <path d={`M${m.x} 184v32M${m.x} 226v35M${m.x} 281v54`} />
              <path d={`M${m.x} 261c7 1 7 10 0 10-4 0-5-2-5-5M${m.x + 5} 276c0-7-10-6-10 0 0 4 3 5 5 5`} />
            </>
          ) : (
            <path d={`M${m.x} 184V${top + 5}M${m.x} ${top + 15}V335`} />
          )}
          <path d={`M${m.x + 4} ${top}q13 10 0 20`} stroke={breaker} />
          <circle cx={m.x} cy="350.500" r="15.300" stroke={GREEN} strokeWidth="1.200" />
          <g stroke="none">
            <Node x={m.x} y={184} fill={GREEN} />
            <Reading x={m.x + 12} y={202} p={m.p} q={m.q} size={16} step={18} />
            <Label x={m.x - 20} y={379} size={16} bold>{m.name}</Label>
            <Label x={m.hpX} y={397} size={16}>{m.hp}</Label>
          </g>
        </g>
      );
    })}
    <g fill="none" stroke={GREEN} strokeWidth="1.300">
      <path d="M839.500 184v153" stroke="#3c9c3c" strokeWidth="1.500" />
      <path d="M836.500 217.500h6.500v20h-6.500zM836.500 222h6.500M836.500 233h6.500" />
      <path d="M824.500 337.500h30.500l-15.500 20zM828 342.500h23M832 347.500h15M835.500 352.500h8" />
    </g>
    <Node x={839.5} y={184} fill={GREEN} />
    <Label x={808} y={372} size={16} bold>LTG Load</Label>
    <Label x={802} y={391} size={16}>100 kVA</Label>
  </Diagram>
);

const Impedance = ({ x, y }: { x: number; y: number }) => (
  <path
    d={`M${x} ${y}l-5 3 10 2-10 3 8 3-3 3v3q5 2 5 5v12q0 2-5 4M${x + 4} ${y + 17}c-10-3-10 8 0 5M${x + 4} ${y + 24}c-10-3-10 8 0 5`}
  />
);

const Winding = ({ x, y, w, up }: { x: number; y: number; w: number; up?: boolean }) => {
  const h = up ? -w * 0.65 : w * 0.65;
  return <path d={`M${x} ${y}` + `q0 ${h} ${w / 2} ${h}q${w / 2} 0 ${w / 2} ${-h}`.repeat(4)} />;
};

const NetworkDiagram = () => (
  <Diagram width={909} height={594} viewBox="109 456 909 594" role="img" aria-label="Sub3 Net one-line diagram">
    <defs>
      <radialGradient id="cool">
        <stop offset="0" stopColor="#00ff80" />
        <stop offset=".45" stopColor="#00ff50" />
        <stop offset=".85" stopColor="#00ff18" />
      </radialGradient>
      <radialGradient id="warm">
        <stop offset="0" stopColor="#d4ff00" />
        <stop offset=".45" stopColor="#70ff00" />
        <stop offset=".9" stopColor="#00ff00" />
      </radialGradient>
      <radialGradient id="mild">
        <stop offset="0" stopColor="#10ff08" />
        <stop offset=".3" stopColor="#00ff18" />
      </radialGradient>
    </defs>
    <circle cx="519" cy="592" r="104" fill="url(#mild)" />
    <circle cx="469" cy="756" r="104" fill="url(#cool)" />
    <circle cx="625.500" cy="1026" r="104" fill="#00ff18" />
    <circle cx="875.500" cy="1022" r="104" fill="#00ff18" />
    <circle cx="846.500" cy="755.500" r="176" fill="url(#warm)" />

    <g fill="none" stroke={MAGENTA} strokeWidth="1.500">
      <path d="M246.500 456v8h10v-8M251 461v43M248 504.500h6.500v21.500h-6.500zM251 526v66" />
      <path d="M159 592v297M135 889.500h49v59h-49z" />
      <ellipse cx="171.500" cy="904.500" rx="6.500" ry="7.500" />
      <path d="M292 592v22M287.500 614h9v8h-9zM292 622v33M284 655.500h16.500M284 661.500h16.500M292 662v27M289.500 689.500h5v21h-5zM292 710v18" />
      <circle cx="292" cy="741" r="12.500" />
      <path d="M908 584q6 5 1 8M907 592q-3 4 1 6" strokeWidth="1.200" />
    </g>
    <circle cx="251" cy="461" r="3" fill="#c030c0" />
    <g fill="none" stroke="#c040b0" strokeWidth="1.500">
      <path d="M476 592v21M471.500 613h9v9h-9zM476 622v53" />
      <Winding x={455} y={673} w={10.7} />
      <path d="M834.500 592v16M830 608.500h8.500v8h-8.500zM834.500 616v39M834.500 693v62" />
      <Impedance x={834.5} y={655} />
      <path d="M798.500 755v56M789 811h19l-9.500 14z" />
      <circle cx="798.500" cy="815" r="12.500" />
      <path d="M875 755v30M871 791l8-7M871 795l8-7M871 799l8-7M872 810l7-8" />
      <circle cx="875" cy="799" r="1.800" />
      <path d="M875 811v43M875 871v44M875 953v96" stroke="#a04c90" strokeDasharray="12 4 3 4" />
      <path d="M872.500 854h5v17h-5zM872.500 858h5M872.500 867h5" />
      <Impedance x={875} y={915} />
    </g>
    <g fill="none" stroke="#1c8c1c" strokeWidth="1.300">
      <Winding x={455} y={695} w={10.7} up />
      <path d="M476 689v66M473.500 726h5.500v17h-5.500zM473.500 730h5.500M473.500 739h5.500" />
      <path d="M400 755v58M387 813h25v24h-25z" />
      <circle cx="399.500" cy="825" r="12" />
      <path d="M391 816l17 17M396 813l15 15M403 813l8 8M388 821l15 15M388 828l8 8M408 816l-17 17M403 813l-15 15M396 813l-8 8M411 821l-15 15M411 828l-8 8" />
      <path d="M517 755v133M514.500 777h5.500v17h-5.500zM514.500 781h5.500M514.500 790h5.500" />
      <path d="M502 853h30.500v40.500h-30.500zM502 867.500h-66.500V1014M420 955h31v68h-31z" />
      <path d="M624.500 922v22" />
      <Winding x={611} y={943} w={6.8} />
    </g>
    <path d="M502 867.500h30.500" stroke="#444" strokeWidth="1.800" />
    <circle cx="509.500" cy="867.500" r="2.600" fill="#b01818" />
    <circle cx="525" cy="867.500" r="2.600" fill="#b01818" />
    <path d="M532.500 867.500h92V922" fill="none" stroke="#c04848" strokeWidth="1.600" strokeDasharray="12 4 4 4" />
    <g fill="none" stroke="#c8843c" strokeWidth="1.500">
      <Winding x={611} y={957} w={6.8} up />
      <path d="M624.500 955v28" />
      <path d="M624.500 986v64" strokeDasharray="3 3 12 3" />
    </g>
    <path d="M604 1026.500h41" stroke="#ff6040" strokeWidth="2.400" />
    <Node x={624.5} y={1026.5} fill="#ff6040" />

    <path d="M129 592h779" stroke={MAGENTA} strokeWidth="3.600" />
    <path d="M778 755.500h138M855 1021.500h40.500" stroke={MAGENTA} strokeWidth="2.400" />
    {[159, 251, 292, 476, 834.5].map((x) => <Node key={x} x={x} y={592} />)}
    {[798.5, 834.5, 875].map((x) => <Node key={x} x={x} y={755.5} />)}
    <Node x={875} y={1021.5} />
    <path d="M379 755h179" stroke="#087808" strokeWidth="3.200" />
    {[400, 476, 517].map((x) => <Node key={x} x={x} y={755} fill="#087808" />)}

    <Reading x={261} y={480} p="1766 kW" q="1024 kvar" step={14} />
    <Reading x={169} y={607} p="477.8 kW" q="272.7 kvar" />
    <Reading x={302} y={607} p="176.2 kW" q="225.3 kvar" />
    <Reading x={487} y={607} p="352.6 kW" q="131.8 kvar" />
    <Reading x={844} y={607} p="539.5 kW" q="299.4 kvar" />
    <Reading x={410} y={771} p="267.1 kW" q="120.8 kvar" />
    <Reading x={527} y={771} p="85.1 kW" q="1.25 kvar" />
    <Reading x={809} y={771} p="375.2 kW" q="232.5 kvar" />
    <Reading x={886} y={771} p="158.3 kW" q="52 kvar" />
    <FlowArrow x={484} y={740} />
    <Label x={487} y={732} fill={RED}>352.2 kW</Label>
    <Label x={487} y={746} fill={RED}>122 kvar</Label>
    <Label x={634} y={745} fill={RED} turn={-14}>101.2 %</Label>
    <Label x={966} y={534} fill={RED} turn={-14}>99.59 %</Label>
    <Label x={939} y={737} fill={RED} turn={-14}>97.58 %</Label>

    <Label x={217} y={556} turn={-90}>1-3/C 750</Label>
    <Label x={230} y={542} turn={-90} bold>Cable2</Label>
    <Label x={105} y={578} bold>Swgr</Label>
    <Label x={139} y={975} bold fill="#000">MCC 3A</Label>
    <Label x={271} y={769} bold>Pump 1</Label>
    <Label x={268} y={784}>500 HP</Label>
    <Label x={512} y={686} bold>XFMR 3</Label>
    <Label x={512} y={700}>1000 kVA</Label>
    <Label x={348} y={733} bold>MCC1</Label>
    <Label x={363} y={854} bold fill="#000">Comp Mtr1</Label>
    <Label x={490} y={923} bold>MainPNL</Label>
    <Label x={491} y={938}>3Ph-4W</Label>
    <Label x={406} y={1047} bold>SubPNL1</Label>
    <Label x={568} y={950} bold>T6</Label>
    <Label x={553} y={966}>50 kVA</Label>
    <Label x={542} y={1011} bold>240 V PNL</Label>
    <Label x={736} y={734} bold>Bus9</Label>
    <Label x={848} y={661} bold>Line4</Label>
    <Label x={844} y={675}>1 mile</Label>
    <Label x={844} y={690}>PLUTO</Label>
    <Label x={780} y={848} bold>LUMP6</Label>
    <Label x={769} y={864}>0.5 MVA</Label>
    <Label x={888} y={805} bold>SPFdr2</Label>
    <Label x={888} y={819} bold>AN</Label>
    <Label x={885} y={920} bold>Cable19</Label>
    <Label x={885} y={950}>2-1/C 1/0</Label>
    <Label x={793} y={1007} bold>1-P Air Drop</Label>
  </Diagram>
);

/* ---------- windows ---------- */

interface StudyWindowProps {
  box: Box;
  title?: string;
  front?: boolean;
  horizontal?: boolean;
  children?: React.ReactNode;
}

const StudyWindow = ({ box, title, front, horizontal, children }: StudyWindowProps) => (
  <Frame {...box} $front={front} aria-label={title ?? "Study View"}>
    {title && (
      <TitleBar $dim={!front}>
        <Glyph size={18} vb="0 0 38 38"><PQScale /></Glyph>
        <Title>{title}</Title>
        <CaptionButtons>
          <CaptionButton type="button" aria-label="Minimize" $dim={!front}>
            <svg width="14" height="12" viewBox="0 0 14 12" aria-hidden="true"><rect x="1.500" y="6.500" width="11" height="4" rx="1" fill="#fff" stroke="#555d68" /></svg>
          </CaptionButton>
          <CaptionButton type="button" aria-label="Maximize" $dim={!front}>
            <svg width="14" height="12" viewBox="0 0 14 12" aria-hidden="true"><path d="M1.500 1.500h11v9h-11zM5 4.500v3h4v-3z" fillRule="evenodd" fill="#fff" stroke="#555d68" /></svg>
          </CaptionButton>
          <CaptionButton type="button" aria-label="Close" $dim={!front} $danger={front}>
            <svg width="14" height="12" viewBox="0 0 14 12" fill="none" aria-hidden="true">
              <path d="M2.500 2l9 8M11.500 2l-9 8" stroke="#555d68" strokeWidth="4.400" />
              <path d="M3 2.500l8 7M11 2.500l-8 7" stroke="#fff" strokeWidth="2.400" />
            </svg>
          </CaptionButton>
        </CaptionButtons>
      </TitleBar>
    )}
    <Client>
      <Canvas>{children}</Canvas>
      <VScroll>
        <ScrollArrow type="button" aria-label="Scroll up"><Chevron to="up" /></ScrollArrow>
        <Thumb />
        <Fill />
        <ScrollArrow type="button" aria-label="Scroll down"><Chevron to="down" /></ScrollArrow>
      </VScroll>
      {horizontal && (
        <>
          <HScroll>
            <ScrollArrow type="button" aria-label="Scroll left"><Chevron to="left" /></ScrollArrow>
            <Thumb />
            <Fill />
            <ScrollArrow type="button" aria-label="Scroll right"><Chevron to="right" /></ScrollArrow>
          </HScroll>
          <Corner>
            <svg width="14" height="14" viewBox="0 0 14 14" aria-hidden="true">
              <path d="M10 2h2v2h-2zM6 6h2v2H6zM10 6h2v2h-2zM2 10h2v2H2zM6 10h2v2H6zM10 10h2v2h-2z" fill="#b8b8b8" />
            </svg>
          </Corner>
        </>
      )}
    </Client>
  </Frame>
);

export default function App() {
  return (
    <>
      <GlobalStyle />
      <Shell>
        <ToolRow>
          <FileToolbar />
          <ThemeToolbar />
        </ToolRow>
        <ToolRow>
          <ContextToolbar />
        </ToolRow>
        <ToolRow>
          <StudyToolbar />
        </ToolRow>
        <Workspace>
          <SystemBar />
          <TabColumn>
            <SideTab type="button">
              <Glyph size={16}>
                <path d="M4 1l8 3-3 6-7-4z" fill="#3c74c4" />
                <path d="M8 9v6" stroke="#c03838" strokeWidth="3" />
                <path d="M6 11h4" stroke="#444" strokeWidth="1.500" />
              </Glyph>
              <SideTabText>System Manager</SideTabText>
            </SideTab>
          </TabColumn>
          <Desktop>
            <StudyWindow
              box={{ $left: 2, $top: 0, $width: 943, $height: 340 }}
              title="Study View=>...=>Comp Mtr1 (Load Flow Analysis)"
            >
              <MotorDiagram />
            </StudyWindow>
            <StudyWindow box={{ $left: 946, $top: 684, $width: 500, $height: 282 }} horizontal />
            <StudyWindow box={{ $left: 944, $top: 4, $width: 500, $height: 681 }} title="Study View" horizontal />
            <StudyWindow
              box={{ $left: 0, $top: 307, $width: 948, $height: 660 }}
              title="Study View=>Sub3 Net (Load Flow Analysis)"
              front
              horizontal
            >
              <NetworkDiagram />
            </StudyWindow>
          </Desktop>
        </Workspace>
      </Shell>
    </>
  );
}
